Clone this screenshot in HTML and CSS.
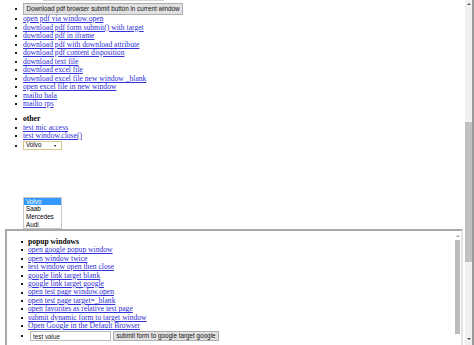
FILE: index.html
```html
<!DOCTYPE html>
<html>
<head>
<meta charset="utf-8">
<link rel="stylesheet" href="styles.css">
</head>
<body>
<div class="window">
  <div class="viewport">
    <div class="cutline"></div>
    <ul class="list first">
      <li class="btn-row"><button class="btn btn-wide">Download pdf browser submit button in current window</button></li>
      <li><a href="#">open pdf via window.open</a></li>
      <li><a href="#">download pdf form submit() with target</a></li>
      <li><a href="#">download pdf in iframe</a></li>
      <li><a href="#">download pdf with download attribute</a></li>
      <li><a href="#">download pdf content disposition</a></li>
      <li><a href="#">download text file</a></li>
      <li><a href="#">download excel file</a></li>
      <li><a href="#">download excel file new window _blank</a></li>
      <li><a href="#">open excel file in new window</a></li>
      <li><a href="#">mailto bala</a></li>
      <li><a href="#">mailto rps</a></li>
    </ul>
    <ul class="list second">
      <li><b>other</b></li>
      <li><a href="#">test mic access</a></li>
      <li><a href="#">test window.close()</a></li>
      <li class="dd-row">
        <div class="dropdown"><span>Volvo</span><span class="caret"></span></div>
      </li>
    </ul>
    <div class="listbox">
      <div class="opt sel">Volvo</div>
      <div class="opt">Saab</div>
      <div class="opt">Mercedes</div>
      <div class="opt">Audi</div>
    </div>
    <div class="frame">
      <div class="frame-body">
        <ul class="list inner">
          <li><b>popup windows</b></li>
          <li><a href="#">open google popup window</a></li>
          <li><a href="#">open window twice</a></li>
          <li><a href="#">test window open then close</a></li>
          <li><a href="#">google link target blank</a></li>
          <li><a href="#">google link target google</a></li>
          <li><a href="#">open test page window.open</a></li>
          <li><a href="#">open test page target=_blank</a></li>
          <li><a href="#">open favorites as relative test page</a></li>
          <li><a href="#">submit dynamic form to target window</a></li>
          <li><a href="#">Open Google in the Default Browser</a></li>
          <li class="form-row">
            <input class="field" type="text" value="test value">
            <button class="btn btn-submit">submit form to google target google</button>
          </li>
        </ul>
      </div>
      <div class="scrollbar inner-sb">
        <div class="arrow up"></div>
        <div class="thumb inner-thumb"></div>
      </div>
    </div>
  </div>
  <div class="scrollbar outer-sb">
    <div class="arrow up"></div>
    <div class="track-gap"></div>
    <div class="thumb outer-thumb"></div>
    <div class="track-fill"></div>
    <div class="arrow down"></div>
  </div>
  <div class="edge"></div>
</div>
</body>
</html>
```

FILE: styles.css
```css
* { box-sizing: border-box; }
html, body { margin: 0; padding: 0; background: #fff; }
body { font-family: "Liberation Serif", "Times New Roman", serif; font-size: 7.6px; color: #000; }

.window { display: flex; width: 474px; height: 345px; overflow: hidden; }
.viewport { width: 465px; height: 345px; overflow: hidden; flex: none; }

.cutline { margin-left: 43px; width: 121px; height: 1px; border-bottom: 1px solid #d4d4d4; }

.list { list-style: none; margin: 0; padding: 0 0 0 15px; }
.list li { display: flex; align-items: center; height: 8.5px; line-height: 8.5px; white-space: nowrap; }
.list li::before { content: ""; flex: none; width: 2px; height: 2px; background: #222; margin-right: 6px; }
.list a { color: #3030d8; text-decoration: underline; }
.list b { font-weight: bold; }

.first { margin-top: 2px; }
.first .btn-row { height: 12px; }
.second { margin-top: 6.5px; }
.second .dd-row { height: 9px; margin-top: 0.5px; }

.btn { font-family: "Liberation Sans", Arial, sans-serif; font-size: 6.3px; color: #111; background: #e1e1e1; border: 1px solid #adadad; border-radius: 0; padding: 0 2px; margin: 0; line-height: 1; white-space: nowrap; }
.btn-wide { width: 160px; height: 12px; }

.dropdown { width: 39px; height: 9px; border: 1px solid #d8c68a; background: #fff; display: flex; align-items: center; justify-content: space-between; padding: 0 5px 0 2px; font-family: "Liberation Sans", Arial, sans-serif; font-size: 6.3px; line-height: 1; }
.caret { width: 0; height: 0; border-left: 1.5px solid transparent; border-right: 1.5px solid transparent; border-top: 2px solid #000; }

.listbox { margin: 46.5px 0 0 23px; width: 39px; border: 1px solid #c8c8c8; background: #fff; font-family: "Liberation Sans", Arial, sans-serif; font-size: 6.3px; }
.opt { height: 7.7px; line-height: 7.7px; padding-left: 2px; white-space: nowrap; }
.opt.sel { background: #3399ff; color: #fff; }

.frame { margin-left: 5px; width: 458px; height: 130px; border: 2px solid #a8a8a8; border-right-color: #e2e2e2; border-bottom-color: #e2e2e2; display: flex; background: #fff; }
.frame-body { flex: 1; padding-top: 6.5px; }
.inner { padding-left: 14px; }
.inner li { height: 8.45px; line-height: 8.45px; }
.inner li::before { margin-right: 5px; }
.inner .form-row { height: 11px; margin-top: 0; gap: 2px; }
.field { width: 81px; height: 10px; border: 1px solid #b8b8b8; padding: 0 2px; margin: 0; font-family: "Liberation Sans", Arial, sans-serif; font-size: 6.3px; color: #222; background: #fff; outline: none; }
.btn-submit { width: 106px; height: 9.5px; padding: 0 2px; }

.scrollbar { flex: none; display: flex; flex-direction: column; align-items: center; }
.inner-sb { width: 7px; background: #fff; padding-top: 1px; }
.outer-sb { width: 7px; height: 345px; background: #f1f1f1; }
.arrow { width: 0; height: 0; border-left: 2px solid transparent; border-right: 2px solid transparent; flex: none; }
.arrow.up { border-bottom: 2.5px solid #606060; margin-top: 3px; }
.arrow.down { border-top: 2.5px solid #505050; margin-bottom: 5px; }
.inner-sb .arrow.up { border-bottom-color: #a0a0a0; }
.thumb { background: #c1c1c1; width: 6px; flex: none; }
.inner-thumb { margin-top: 3px; height: 94px; width: 5px; background: #bcbcbc; }
.track-gap { height: 117px; flex: none; }
.outer-thumb { height: 140px; width: 7px; }
.track-fill { flex: 1; }
.edge { width: 2px; height: 345px; background: #9a9a9a; flex: none; }
```
